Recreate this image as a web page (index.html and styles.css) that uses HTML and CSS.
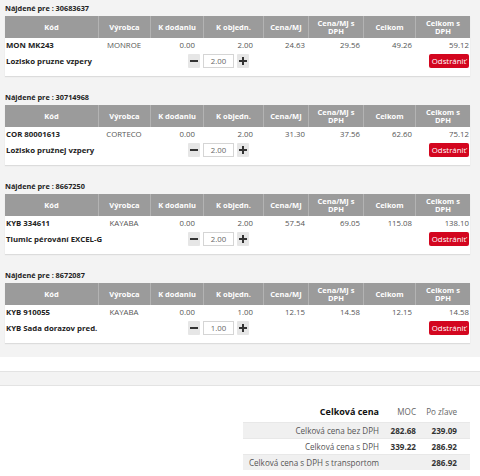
FILE: index.html
```html
<!DOCTYPE html>
<html lang="sk">
<head>
<meta charset="utf-8">
<link rel="stylesheet" href="styles.css">
</head>
<body>
<div class="results">
  <section class="group">
    <div class="title">Nájdené pre : 30683637</div>
    <div class="card">
      <div class="grid head">
        <div>Kód</div><div>Výrobca</div><div>K dodaniu</div><div>K objedn.</div><div>Cena/MJ</div><div>Cena/MJ s DPH</div><div>Celkom</div><div>Celkom s DPH</div>
      </div>
      <div class="grid row">
        <div class="code">MON MK243</div><div class="c">MONROE</div><div class="r rd">0.00</div><div class="r ro">2.00</div><div class="r">24.63</div><div class="r">29.56</div><div class="r">49.26</div><div class="r">59.12</div>
      </div>
      <div class="row2">
        <div class="name">Lozisko pruzne vzpery</div>
        <div class="qty"><span class="btn minus"></span><span class="inp">2.00</span><span class="btn plus"></span></div>
        <div class="del"><span class="remove">Odstrániť</span></div>
      </div>
    </div>
  </section>
  <section class="group">
    <div class="title">Nájdené pre : 30714968</div>
    <div class="card">
      <div class="grid head">
        <div>Kód</div><div>Výrobca</div><div>K dodaniu</div><div>K objedn.</div><div>Cena/MJ</div><div>Cena/MJ s DPH</div><div>Celkom</div><div>Celkom s DPH</div>
      </div>
      <div class="grid row">
        <div class="code">COR 80001613</div><div class="c">CORTECO</div><div class="r rd">0.00</div><div class="r ro">2.00</div><div class="r">31.30</div><div class="r">37.56</div><div class="r">62.60</div><div class="r">75.12</div>
      </div>
      <div class="row2">
        <div class="name">Ložisko pružnej vzpery</div>
        <div class="qty"><span class="btn minus"></span><span class="inp">2.00</span><span class="btn plus"></span></div>
        <div class="del"><span class="remove">Odstrániť</span></div>
      </div>
    </div>
  </section>
  <section class="group">
    <div class="title">Nájdené pre : 8667250</div>
    <div class="card">
      <div class="grid head">
        <div>Kód</div><div>Výrobca</div><div>K dodaniu</div><div>K objedn.</div><div>Cena/MJ</div><div>Cena/MJ s DPH</div><div>Celkom</div><div>Celkom s DPH</div>
      </div>
      <div class="grid row">
        <div class="code">KYB 334611</div><div class="c">KAYABA</div><div class="r rd">0.00</div><div class="r ro">2.00</div><div class="r">57.54</div><div class="r">69.05</div><div class="r">115.08</div><div class="r">138.10</div>
      </div>
      <div class="row2">
        <div class="name">Tlumic pérování EXCEL-G</div>
        <div class="qty"><span class="btn minus"></span><span class="inp">2.00</span><span class="btn plus"></span></div>
        <div class="del"><span class="remove">Odstrániť</span></div>
      </div>
    </div>
  </section>
  <section class="group">
    <div class="title">Nájdené pre : 8672087</div>
    <div class="card">
      <div class="grid head">
        <div>Kód</div><div>Výrobca</div><div>K dodaniu</div><div>K objedn.</div><div>Cena/MJ</div><div>Cena/MJ s DPH</div><div>Celkom</div><div>Celkom s DPH</div>
      </div>
      <div class="grid row">
        <div class="code">KYB 910055</div><div class="c">KAYABA</div><div class="r rd">0.00</div><div class="r ro">1.00</div><div class="r">12.15</div><div class="r">14.58</div><div class="r">12.15</div><div class="r">14.58</div>
      </div>
      <div class="row2">
        <div class="name">KYB Sada dorazov pred.</div>
        <div class="qty"><span class="btn minus"></span><span class="inp">1.00</span><span class="btn plus"></span></div>
        <div class="del"><span class="remove">Odstrániť</span></div>
      </div>
    </div>
  </section>
</div>
<div class="strip white"></div>
<div class="strip grey"></div>
<div class="totals">
  <div class="trow thead"><div class="lbl big">Celková cena</div><div class="v1 light">MOC</div><div class="v2 light">Po zľave</div></div>
  <div class="trow shade"><div class="lbl">Celková cena bez DPH</div><div class="v1">282.68</div><div class="v2">239.09</div></div>
  <div class="trow"><div class="lbl">Celková cena s DPH</div><div class="v1">339.22</div><div class="v2">286.92</div></div>
  <div class="trow shade"><div class="lbl">Celková cena s DPH s transportom</div><div class="v1"></div><div class="v2">286.92</div></div>
</div>
</body>
</html>
```
FILE: styles.css
```css
* { box-sizing: border-box; }
html, body { margin: 0; padding: 0; background: #fff; }
body {
  font-family: "Open Sans", "Liberation Sans", sans-serif;
  font-size: 7.8px;
  color: #333;
  width: 480px;
}
.results {
  background: #f3f3f3;
  padding: 0 10px 7px 5px;
}
.group { height: 89px; }
.group:last-child { height: 83px; }
.title {
  height: 16px;
  line-height: 16px;
  font-weight: 700;
  color: #222;
  font-size: 7.3px;
}
.card {
  background: #fff;
  height: 60px;
  box-shadow: 0 1px 1px #dcdcdc;
}
.grid {
  display: grid;
  grid-template-columns: 93px 52px 53px 60px 45px 55px 52px 55px;
}
.head {
  background: #9b9b9b;
  height: 22px;
  color: #fff;
  font-weight: 700;
  font-size: 7.5px;
}
.head > div {
  display: flex;
  align-items: center;
  justify-content: center;
  text-align: center;
  line-height: 8px;
  border-left: 1px solid #b3b3b3;
  padding: 0 6px;
}
.head > div:first-child { border-left: none; }
.row { height: 14px; line-height: 14px; color: #555; }
.row .code { font-weight: 700; color: #222; padding-left: 1px; }
.row .c { text-align: center; }
.row .r { text-align: right; padding-right: 3px; }
.row .rd { padding-right: 8px; }
.row .ro { padding-right: 10px; }
.row > div:last-child { padding-right: 1px; }
.row2 {
  display: flex;
  align-items: center;
  height: 18px;
}
.name { width: 183px; font-weight: 700; color: #222; padding-left: 1px; }
.qty { display: flex; align-items: center; gap: 3px; }
.btn {
  width: 12px; height: 14px;
  background: #e6e6e6;
  border-radius: 1px;
  position: relative;
}
.btn.minus::before, .btn.plus::before, .btn.plus::after {
  content: "";
  position: absolute;
  background: #333;
}
.btn.minus::before, .btn.plus::before { left: 2px; width: 8px; top: 6px; height: 2px; }
.btn.plus::after { left: 5px; width: 2px; top: 3px; height: 8px; }
.inp {
  width: 31px; height: 14px;
  border: 1px solid #d5d5d5;
  text-align: center;
  line-height: 12px;
  color: #666;
}
.del { margin-left: auto; }
.remove {
  display: block;
  background: #d3061f;
  color: #fff;
  width: 40px; height: 14px;
  line-height: 14px;
  text-align: center;
  border-radius: 2px;
  margin-right: 1px;
}
.strip { height: 15px; }
.strip.white { background: #fff; border-bottom: 1px solid #e3e3e3; }
.strip.grey { height: 14px; background: #f3f3f3; border-bottom: 1px solid #e3e3e3; }
.totals {
  margin: 16px 0 0 243px;
  width: 227px;
  font-size: 8.1px;
}
.trow {
  display: grid;
  grid-template-columns: 136px 38px 53px;
  height: 16px;
  line-height: 16px;
  align-items: center;
}
.trow.thead { height: 20px; line-height: 20px; }
.trow.shade { background: #f0f0f0; }
.trow + .trow:not(.thead) { border-top: 1px solid #e8e8e8; }
.lbl { text-align: right; color: #555; }
.lbl.big { font-size: 9px; font-weight: 700; color: #111; }
.v1, .v2 { text-align: right; font-weight: 700; color: #333; }
.v2 { padding-right: 13px; }
.v1 { padding-right: 1px; }
.light { font-weight: 400; color: #666; }
```
